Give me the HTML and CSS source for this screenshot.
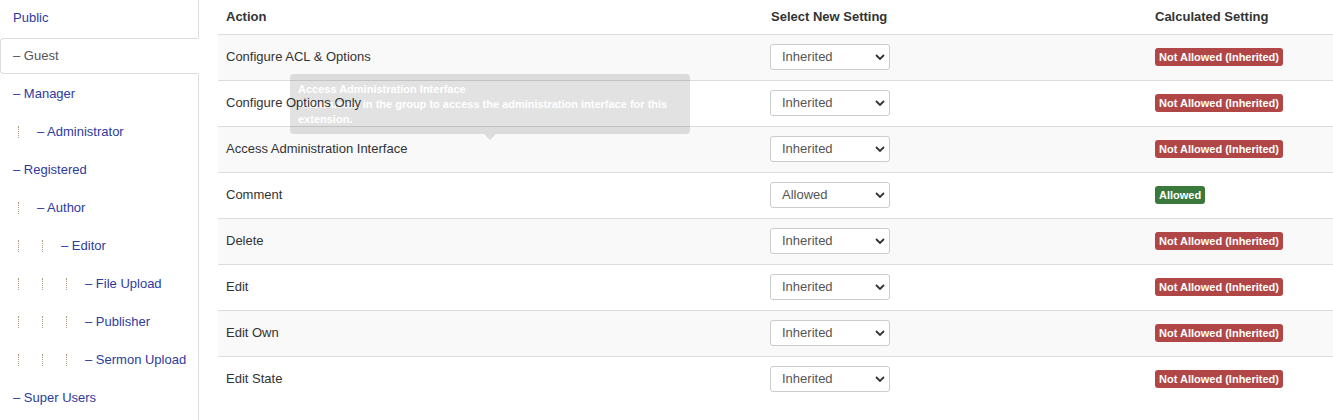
FILE: index.html
```html
<!DOCTYPE html>
<html>
<head>
<meta charset="utf-8">
<link rel="stylesheet" href="styles.css">
</head>
<body>
<div class="page">
  <ul class="groups">
    <li><a>Public</a></li>
    <li class="active"><a>&ndash; Guest</a></li>
    <li><a>&ndash; Manager</a></li>
    <li><a><span class="gi"></span>&ndash; Administrator</a></li>
    <li><a>&ndash; Registered</a></li>
    <li><a><span class="gi"></span>&ndash; Author</a></li>
    <li><a><span class="gi"></span><span class="gi"></span>&ndash; Editor</a></li>
    <li><a><span class="gi"></span><span class="gi"></span><span class="gi"></span>&ndash; File Upload</a></li>
    <li><a><span class="gi"></span><span class="gi"></span><span class="gi"></span>&ndash; Publisher</a></li>
    <li><a><span class="gi"></span><span class="gi"></span><span class="gi"></span>&ndash; Sermon Upload</a></li>
    <li><a>&ndash; Super Users</a></li>
  </ul>
  <div class="main">
    <table class="rules">
      <colgroup><col class="c1"><col class="c2"><col class="c3"></colgroup>
      <thead>
        <tr><th>Action</th><th>Select New Setting</th><th>Calculated Setting</th></tr>
      </thead>
      <tbody>
        <tr><td>Configure ACL &amp; Options</td><td><div class="sel"><select><option>Inherited</option></select><svg class="chev" viewBox="0 0 10 6" width="10" height="6"><path d="M1 1l4 4 4-4" fill="none" stroke="#333" stroke-width="1.8"/></svg></div></td><td><span class="badge no">Not Allowed (Inherited)</span></td></tr>
        <tr><td>Configure Options Only</td><td><div class="sel"><select><option>Inherited</option></select><svg class="chev" viewBox="0 0 10 6" width="10" height="6"><path d="M1 1l4 4 4-4" fill="none" stroke="#333" stroke-width="1.8"/></svg></div></td><td><span class="badge no">Not Allowed (Inherited)</span></td></tr>
        <tr><td>Access Administration Interface</td><td><div class="sel"><select><option>Inherited</option></select><svg class="chev" viewBox="0 0 10 6" width="10" height="6"><path d="M1 1l4 4 4-4" fill="none" stroke="#333" stroke-width="1.8"/></svg></div></td><td><span class="badge no">Not Allowed (Inherited)</span></td></tr>
        <tr><td>Comment</td><td><div class="sel"><select><option>Allowed</option></select><svg class="chev" viewBox="0 0 10 6" width="10" height="6"><path d="M1 1l4 4 4-4" fill="none" stroke="#333" stroke-width="1.8"/></svg></div></td><td><span class="badge yes">Allowed</span></td></tr>
        <tr><td>Delete</td><td><div class="sel"><select><option>Inherited</option></select><svg class="chev" viewBox="0 0 10 6" width="10" height="6"><path d="M1 1l4 4 4-4" fill="none" stroke="#333" stroke-width="1.8"/></svg></div></td><td><span class="badge no">Not Allowed (Inherited)</span></td></tr>
        <tr><td>Edit</td><td><div class="sel"><select><option>Inherited</option></select><svg class="chev" viewBox="0 0 10 6" width="10" height="6"><path d="M1 1l4 4 4-4" fill="none" stroke="#333" stroke-width="1.8"/></svg></div></td><td><span class="badge no">Not Allowed (Inherited)</span></td></tr>
        <tr><td>Edit Own</td><td><div class="sel"><select><option>Inherited</option></select><svg class="chev" viewBox="0 0 10 6" width="10" height="6"><path d="M1 1l4 4 4-4" fill="none" stroke="#333" stroke-width="1.8"/></svg></div></td><td><span class="badge no">Not Allowed (Inherited)</span></td></tr>
        <tr><td>Edit State</td><td><div class="sel"><select><option>Inherited</option></select><svg class="chev" viewBox="0 0 10 6" width="10" height="6"><path d="M1 1l4 4 4-4" fill="none" stroke="#333" stroke-width="1.8"/></svg></div></td><td><span class="badge no">Not Allowed (Inherited)</span></td></tr>
      </tbody>
    </table>
  </div>
  <div class="tooltip">
    <div class="tip-inner"><strong>Access Administration Interface</strong><br>Allow users in the group to access the administration interface for this extension.</div>
    <div class="tip-arrow"></div>
  </div>
</div>
</body>
</html>
```
FILE: styles.css
```css
html, body {
  margin: 0;
  padding: 0;
  background: #fff;
}
body {
  font-family: "Liberation Sans", Arial, sans-serif;
  font-size: 13px;
  color: #333;
}
.page {
  position: relative;
  display: flex;
  align-items: flex-start;
  height: 420px;
  overflow: hidden;
}
.groups {
  list-style: none;
  margin: 0;
  padding: 0;
  width: 198px;
  min-height: 420px;
  border-right: 1px solid #ddd;
  flex: none;
}
.groups li a {
  display: flex;
  align-items: center;
  height: 36px;
  margin-bottom: 2px;
  padding-left: 13px;
  color: #2e3b9e;
  line-height: 18px;
  box-sizing: border-box;
}
.groups li.active a {
  position: relative;
  margin-right: -1px;
  padding-left: 12px;
  border: 1px solid #ddd;
  border-right-color: #fff;
  border-radius: 4px 0 0 4px;
  background: #fff;
  color: #555;
}
.gi {
  display: inline-block;
  width: 0;
  height: 12px;
  border-left: 1px dotted #a89c84;
  margin-left: 5px;
  margin-right: 18px;
}
.main {
  flex: 1;
  margin-left: 19px;
}
.rules {
  width: 100%;
  border-collapse: collapse;
  table-layout: fixed;
}
.c1 { width: 545px; }
.c2 { width: 384px; }
.c3 { width: auto; }
.rules th {
  text-align: left;
  font-weight: bold;
  height: 34px;
  padding: 0 8px;
  box-sizing: border-box;
  vertical-align: middle;
}
.rules td {
  height: 46px;
  padding: 0 8px 1px;
  border-top: 1px solid #ddd;
  box-sizing: border-box;
  vertical-align: middle;
}
.rules tbody tr:nth-child(odd) td {
  background: #f9f9f9;
}
.sel {
  position: relative;
  width: 120px;
  height: 26px;
  margin-left: -1px;
}
.sel select {
  appearance: none;
  -webkit-appearance: none;
  width: 120px;
  height: 26px;
  border: 1px solid #ccc;
  border-radius: 3px;
  background: #fff;
  color: #555;
  font-family: "Liberation Sans", Arial, sans-serif;
  font-size: 13px;
  padding: 0 11px;
  box-sizing: border-box;
}
.chev {
  position: absolute;
  right: 5px;
  top: 10px;
  pointer-events: none;
}
.badge {
  display: inline-block;
  padding: 3px 4px;
  font-size: 11px;
  font-weight: bold;
  line-height: 12px;
  color: #fff;
  border-radius: 3px;
}
.badge.no { background: #b04646; }
.badge.yes { background: #3b783b; }
.tooltip {
  position: absolute;
  left: 290px;
  top: 74px;
  width: 400px;
  opacity: 0.11;
}
.tip-inner {
  background: #000;
  color: #fff;
  border-radius: 4px;
  padding: 8px 8px;
  height: 60px;
  box-sizing: border-box;
  font-size: 11px;
  font-weight: bold;
  line-height: 15px;
}
.tip-arrow {
  width: 0;
  height: 0;
  margin-left: 194px;
  border-left: 6px solid transparent;
  border-right: 6px solid transparent;
  border-top: 6px solid #000;
}
```
